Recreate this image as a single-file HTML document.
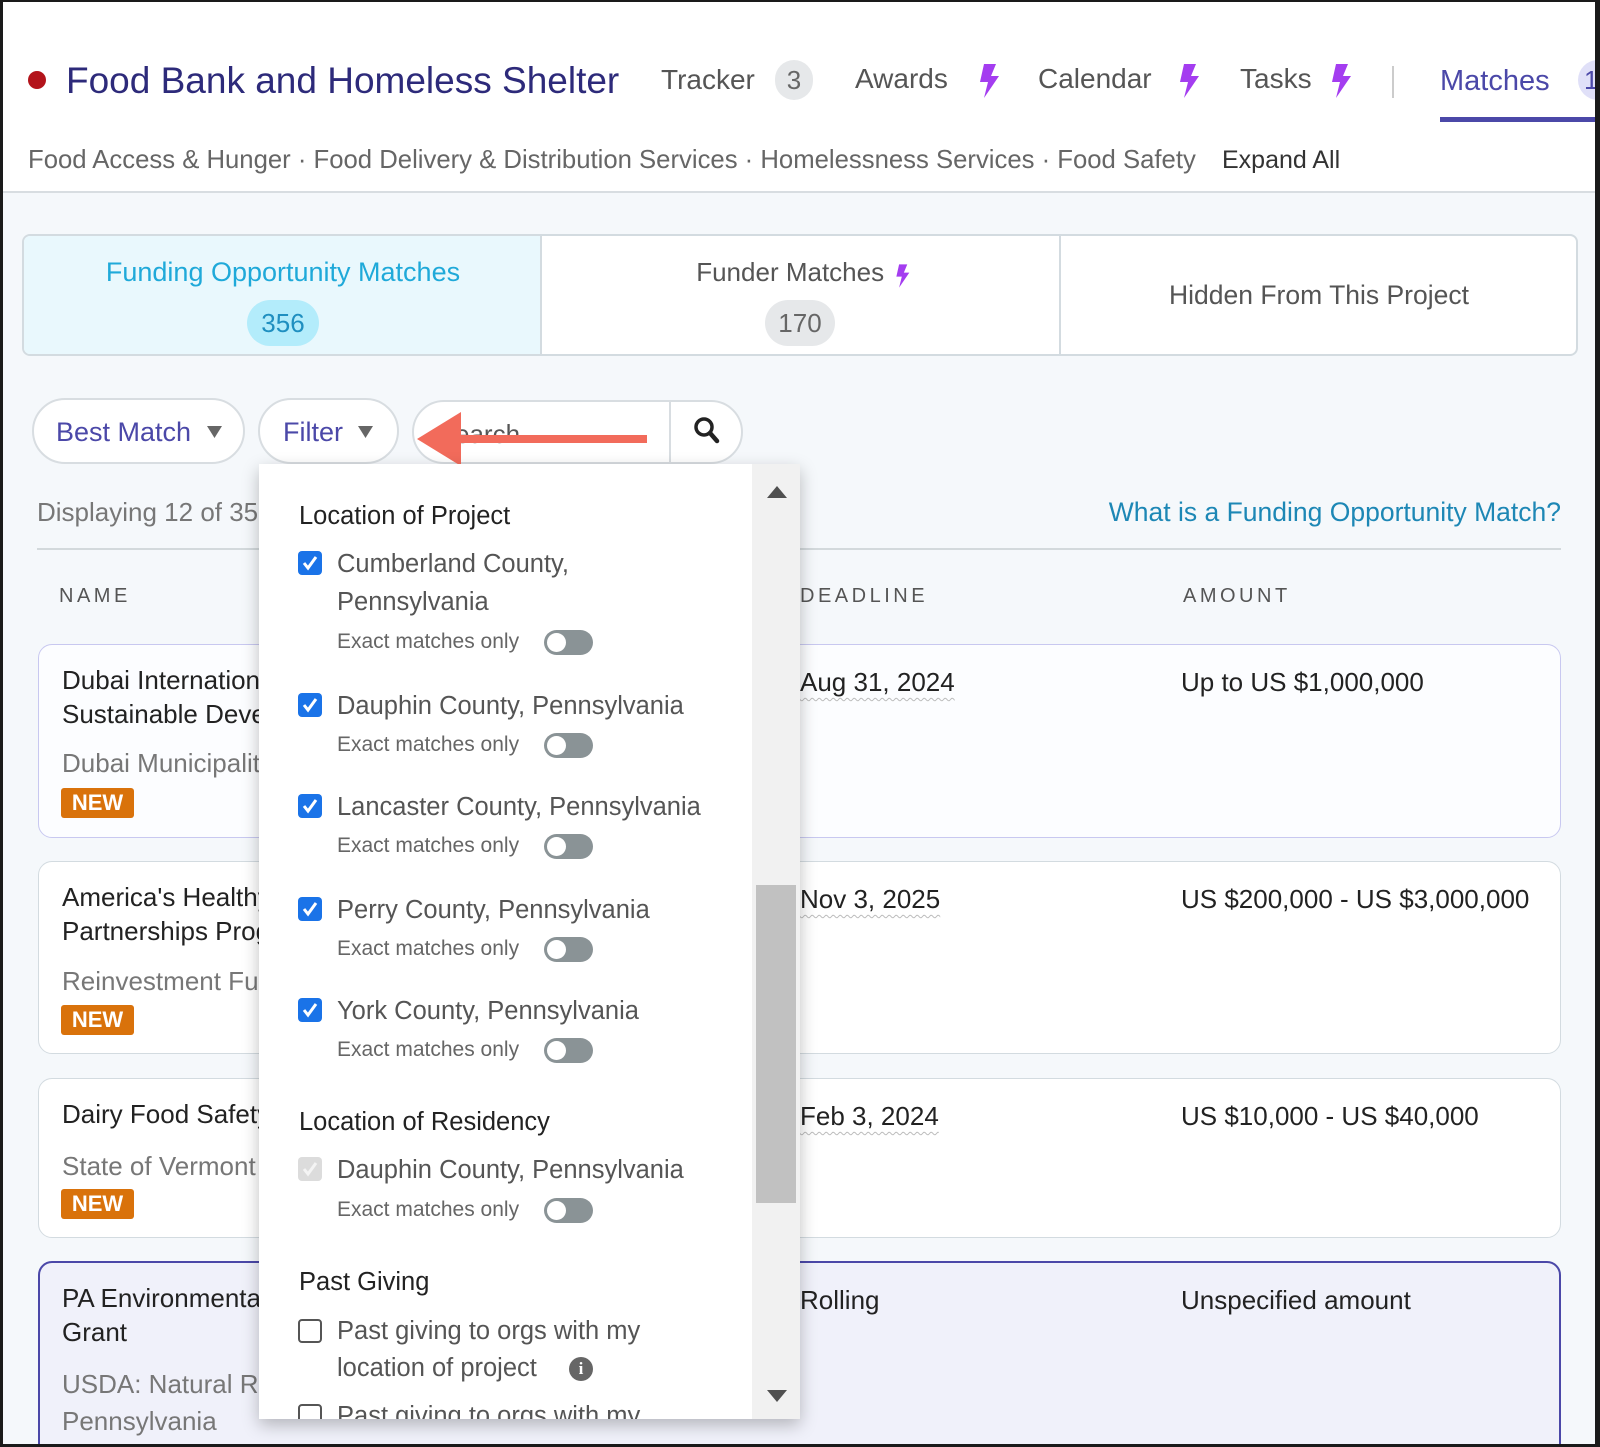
<!DOCTYPE html>
<html><head><meta charset="utf-8"><style>
*{margin:0;padding:0;box-sizing:border-box}
body{width:1600px;height:1447px;overflow:hidden;background:#1a1a1a;font-family:"Liberation Sans",sans-serif;position:relative}
#pg{position:absolute;left:3px;top:2px;width:1592px;height:1442px;background:#f5f8fb;overflow:hidden}
.a{position:absolute;white-space:nowrap}
.t{position:absolute;white-space:nowrap;line-height:30px}
.card{position:absolute;left:35px;width:1523px;border:1.5px solid #d3dbe0;border-radius:14px;background:#fff}
.new{position:absolute;left:58px;width:73px;height:30px;background:#d9720b;color:#fff;font-weight:bold;font-size:22px;line-height:30px;text-align:center;border-radius:3px}
.ct{font-size:26px;color:#222}
.cs{font-size:26px;color:#777}
.dl{font-size:26px;color:#222;text-decoration:underline wavy #bbb;text-decoration-thickness:1px;text-underline-offset:6px}
.cb{position:absolute;left:39px;width:24px;height:24px;border-radius:4px;background:#1a73e8}
.cb svg{position:absolute;left:3px;top:3px}
.cbo{position:absolute;left:39px;width:24px;height:24px;border-radius:4px;border:2px solid #555;background:#fff}
.lb{position:absolute;left:78px;font-size:25.5px;color:#555;line-height:30px;white-space:nowrap}
.ex{position:absolute;left:78px;font-size:21px;color:#666;line-height:26px;white-space:nowrap}
.tg{position:absolute;left:285px;width:49px;height:25px;border-radius:13px;background:#8a9396}
.tg:after{content:"";position:absolute;left:3px;top:3px;width:19px;height:19px;border-radius:50%;background:#fff}
.hd{position:absolute;left:40px;font-size:25.5px;color:#222;line-height:30px;white-space:nowrap}
.bolt{position:absolute}
</style></head><body><div id="pg">
<div class="a" style="left:0;top:0;width:1592px;height:191px;background:#fff;border-bottom:2px solid #d8dde1"></div>
<div class="a" style="left:25px;top:69px;width:18px;height:18px;border-radius:50%;background:#b3141b"></div>
<div class="t" style="left:63px;top:59px;font-size:37px;line-height:40px;color:#2d2a7a">Food Bank and Homeless Shelter</div>
<div class="t" style="left:658px;top:63px;font-size:28px;color:#555">Tracker</div>
<div class="a" style="left:772px;top:58px;width:38px;height:40px;border-radius:20px;background:#e6e8ea;color:#666;font-size:26px;line-height:40px;text-align:center">3</div>
<div class="t" style="left:852px;top:62px;font-size:28px;color:#555">Awards</div>
<svg class="bolt" style="left:975px;top:62px" width="22" height="34" viewBox="0 0 22 34"><path d="M6 0h12l-5 12h8L6 34l4-16H2z" fill="#a43df0"/></svg>
<div class="t" style="left:1035px;top:62px;font-size:28px;color:#555">Calendar</div>
<svg class="bolt" style="left:1175px;top:62px" width="22" height="34" viewBox="0 0 22 34"><path d="M6 0h12l-5 12h8L6 34l4-16H2z" fill="#a43df0"/></svg>
<div class="t" style="left:1237px;top:62px;font-size:28px;color:#555">Tasks</div>
<svg class="bolt" style="left:1327px;top:62px" width="22" height="34" viewBox="0 0 22 34"><path d="M6 0h12l-5 12h8L6 34l4-16H2z" fill="#a43df0"/></svg>
<div class="a" style="left:1389px;top:64px;width:2px;height:32px;background:#ccc"></div>
<div class="t" style="left:1437px;top:64px;font-size:29px;color:#4b48a8">Matches</div>
<div class="a" style="left:1575px;top:58px;width:40px;height:40px;border-radius:20px;background:#e0e0f8;color:#4b48a8;font-size:26px;line-height:40px;padding-left:6px">10</div>
<div class="a" style="left:1437px;top:115px;width:160px;height:5px;background:#4b48a8"></div>
<div class="t" style="left:25px;top:143px;font-size:25.7px;color:#666">Food Access &amp; Hunger · Food Delivery &amp; Distribution Services · Homelessness Services · Food Safety</div>
<div class="t" style="left:1219px;top:143px;font-size:25px;color:#333">Expand All</div>
<div class="a" style="left:19px;top:232px;width:1556px;height:122px;border:2px solid #d3dbe0;border-radius:8px;background:#fff;overflow:hidden">
 <div class="a" style="left:0;top:0;width:518px;height:120px;background:#e9f8fd;border-right:2px solid #d3dbe0"></div>
 <div class="a" style="left:1035px;top:0;width:2px;height:120px;background:#d3dbe0"></div>
</div>
<div class="t" style="left:21px;top:255px;width:518px;text-align:center;font-size:27px;color:#1fa9d9">Funding Opportunity Matches</div>
<div class="a" style="left:244px;top:298px;width:72px;height:46px;border-radius:23px;background:#b3ecfb;color:#1f8fc0;font-size:26px;line-height:46px;text-align:center">356</div>
<div class="t" style="left:540px;top:255px;width:516px;text-align:center;font-size:26px;color:#555">Funder Matches&nbsp;&nbsp;&nbsp;</div>
<svg class="bolt" style="left:892px;top:262px" width="15" height="24" viewBox="0 0 22 34"><path d="M6 0h12l-5 12h8L6 34l4-16H2z" fill="#a43df0"/></svg>
<div class="a" style="left:762px;top:298px;width:70px;height:46px;border-radius:23px;background:#e6e8ea;color:#666;font-size:26px;line-height:46px;text-align:center">170</div>
<div class="t" style="left:1056px;top:278px;width:520px;text-align:center;font-size:26.5px;color:#555">Hidden From This Project</div>
<div class="a" style="left:29px;top:396px;width:213px;height:66px;border:2px solid #d8dde1;border-radius:33px;background:#fff"></div>
<div class="t" style="left:53px;top:415px;font-size:27px;color:#4b48a8">Best Match</div>
<svg class="a" style="left:204px;top:424px" width="15" height="12"><path d="M0 0h15L7.5 12z" fill="#666"/></svg>
<div class="a" style="left:255px;top:396px;width:141px;height:66px;border:2px solid #d8dde1;border-radius:33px;background:#fff"></div>
<div class="t" style="left:280px;top:415px;font-size:27px;color:#4b48a8">Filter</div>
<svg class="a" style="left:355px;top:424px" width="15" height="12"><path d="M0 0h15L7.5 12z" fill="#666"/></svg>
<div class="a" style="left:409px;top:398px;width:331px;height:64px;border:2px solid #d8dde1;border-radius:32px;background:#fff"></div>
<div class="t" style="left:452px;top:417px;font-size:26px;color:#555">earch</div>
<div class="a" style="left:666px;top:400px;width:2px;height:60px;background:#d8dde1"></div>
<svg class="a" style="left:690px;top:414px" width="28" height="30" viewBox="0 0 28 30"><circle cx="11" cy="11" r="8" fill="none" stroke="#222" stroke-width="3.5"/><path d="M17 17l7 8" stroke="#222" stroke-width="4.5" stroke-linecap="round"/></svg>
<svg class="a" style="left:414px;top:410px" width="232" height="54" viewBox="0 0 232 54"><path d="M40 23h190v8H40z" fill="#f26b5b"/><path d="M0 27L44 0v54z" fill="#f26b5b"/></svg>
<div class="t" style="left:34px;top:495px;font-size:26px;color:#777">Displaying 12 of 356</div>
<div class="t" style="left:100px;top:495px;width:1458px;text-align:right;font-size:26.5px;color:#1d87b5">What is a Funding Opportunity Match?</div>
<div class="a" style="left:34px;top:546px;width:1524px;height:2px;background:#d3d9dc"></div>
<div class="t" style="left:56px;top:579px;font-size:20px;letter-spacing:3.5px;color:#555">NAME</div>
<div class="t" style="left:797px;top:579px;font-size:20px;letter-spacing:3.5px;color:#555">DEADLINE</div>
<div class="t" style="left:1180px;top:579px;font-size:20px;letter-spacing:3.5px;color:#555">AMOUNT</div>
<div class="card" style="top:642px;height:194px;border-color:#c8c8f0;background:#fcfdff"></div>
<div class="t ct" style="left:59px;top:663px">Dubai International Award for</div>
<div class="t ct" style="left:59px;top:697px">Sustainable Development</div>
<div class="t cs" style="left:59px;top:746px">Dubai Municipality</div>
<div class="new" style="top:786px">NEW</div>
<div class="t dl" style="left:797px;top:665px">Aug 31, 2024</div>
<div class="t ct" style="left:1178px;top:665px">Up to US $1,000,000</div>
<div class="card" style="top:859px;height:193px"></div>
<div class="t ct" style="left:59px;top:880px">America's Healthy Food</div>
<div class="t ct" style="left:59px;top:914px">Partnerships Program</div>
<div class="t cs" style="left:59px;top:964px">Reinvestment Fund</div>
<div class="new" style="top:1003px">NEW</div>
<div class="t dl" style="left:797px;top:882px">Nov 3, 2025</div>
<div class="t ct" style="left:1178px;top:882px">US $200,000 - US $3,000,000</div>
<div class="card" style="top:1076px;height:160px"></div>
<div class="t ct" style="left:59px;top:1097px">Dairy Food Safety Grant</div>
<div class="t cs" style="left:59px;top:1149px">State of Vermont</div>
<div class="new" style="top:1187px">NEW</div>
<div class="t dl" style="left:797px;top:1099px">Feb 3, 2024</div>
<div class="t ct" style="left:1178px;top:1099px">US $10,000 - US $40,000</div>
<div class="card" style="top:1259px;height:220px;border:2px solid #4b48a8;background:#f0f1fa"></div>
<div class="t ct" style="left:59px;top:1281px">PA Environmental Quality</div>
<div class="t ct" style="left:59px;top:1315px">Grant</div>
<div class="t cs" style="left:59px;top:1367px">USDA: Natural Resources</div>
<div class="t cs" style="left:59px;top:1404px">Pennsylvania</div>
<div class="t ct" style="left:797px;top:1283px">Rolling</div>
<div class="t ct" style="left:1178px;top:1283px">Unspecified amount</div>
<div class="a" style="left:256px;top:462px;width:541px;height:955px;background:#fff;box-shadow:0 6px 16px rgba(0,0,0,.25);overflow:hidden">
 <div class="a" style="left:493px;top:0;width:48px;height:955px;background:#f1f1f1"></div>
 <div class="a" style="left:497px;top:421px;width:40px;height:318px;background:#c1c1c1"></div>
 <svg class="a" style="left:508px;top:22px" width="20" height="12"><path d="M0 12h20L10 0z" fill="#505050"/></svg>
 <svg class="a" style="left:508px;top:926px" width="20" height="12"><path d="M0 0h20L10 12z" fill="#505050"/></svg>
 <div class="hd" style="top:37px">Location of Project</div>
 <div class="cb" style="top:87px"><svg width="18" height="18"><path d="M3 9l4 5 8-11" fill="none" stroke="#fff" stroke-width="3"/></svg></div>
 <div class="lb" style="top:85px">Cumberland County,</div>
 <div class="lb" style="top:123px">Pennsylvania</div>
 <div class="ex" style="top:165px">Exact matches only</div><div class="tg" style="top:166px"></div>
 <div class="cb" style="top:229px"><svg width="18" height="18"><path d="M3 9l4 5 8-11" fill="none" stroke="#fff" stroke-width="3"/></svg></div>
 <div class="lb" style="top:227px">Dauphin County, Pennsylvania</div>
 <div class="ex" style="top:268px">Exact matches only</div><div class="tg" style="top:269px"></div>
 <div class="cb" style="top:330px"><svg width="18" height="18"><path d="M3 9l4 5 8-11" fill="none" stroke="#fff" stroke-width="3"/></svg></div>
 <div class="lb" style="top:328px">Lancaster County, Pennsylvania</div>
 <div class="ex" style="top:369px">Exact matches only</div><div class="tg" style="top:370px"></div>
 <div class="cb" style="top:433px"><svg width="18" height="18"><path d="M3 9l4 5 8-11" fill="none" stroke="#fff" stroke-width="3"/></svg></div>
 <div class="lb" style="top:431px">Perry County, Pennsylvania</div>
 <div class="ex" style="top:472px">Exact matches only</div><div class="tg" style="top:473px"></div>
 <div class="cb" style="top:534px"><svg width="18" height="18"><path d="M3 9l4 5 8-11" fill="none" stroke="#fff" stroke-width="3"/></svg></div>
 <div class="lb" style="top:532px">York County, Pennsylvania</div>
 <div class="ex" style="top:573px">Exact matches only</div><div class="tg" style="top:574px"></div>
 <div class="hd" style="top:643px">Location of Residency</div>
 <div class="cb" style="top:693px;background:#dcdcdc"><svg width="18" height="18"><path d="M3 9l4 5 8-11" fill="none" stroke="#f4f4f4" stroke-width="3"/></svg></div>
 <div class="lb" style="top:691px">Dauphin County, Pennsylvania</div>
 <div class="ex" style="top:733px">Exact matches only</div><div class="tg" style="top:734px"></div>
 <div class="hd" style="top:803px">Past Giving</div>
 <div class="cbo" style="top:855px"></div>
 <div class="lb" style="top:852px">Past giving to orgs with my</div>
 <div class="lb" style="top:889px">location of project</div>
 <div class="a" style="left:310px;top:893px;width:24px;height:24px;border-radius:50%;background:#666;color:#fff;font-size:17px;font-weight:bold;line-height:24px;text-align:center;font-family:'Liberation Serif',serif">i</div>
 <div class="cbo" style="top:940px"></div>
 <div class="lb" style="top:937px">Past giving to orgs with my</div>
</div>
</div></body></html>
